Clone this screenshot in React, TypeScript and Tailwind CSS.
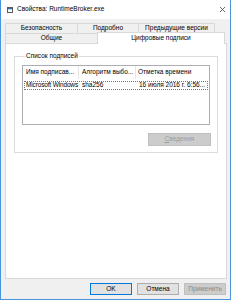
import React from 'react';

function TitleBar() {
  return (
    <div className="h-[19px] bg-white flex items-center pl-[6px] pr-[5px]">
      <svg width="6" height="6" viewBox="0 0 6 6" className="shrink-0">
        <rect x="0.5" y="0.5" width="5" height="5" fill="#ffffff" stroke="#5a5a5a" />
        <rect x="1" y="1" width="4" height="1.3" fill="#2f6fb5" />
      </svg>
      <span className="ml-[4px] text-black">Свойства: RuntimeBroker.exe</span>
      <svg width="5" height="5" viewBox="0 0 5 5" className="ml-auto shrink-0">
        <path d="M0 0L5 5M5 0L0 5" stroke="#444" strokeWidth="0.8" />
      </svg>
    </div>
  );
}

function Tabs() {
  return (
    <div className="flex flex-col">
      {/* back row */}
      <div className="flex h-[10px]">
        <div className="w-[72px] border-t border-l border-[#d9d9d9] flex items-center justify-center">Безопасность</div>
        <div className="w-[61px] border-t border-l border-[#d9d9d9] flex items-center justify-center">Подробно</div>
        <div className="w-[77px] border-t border-x border-[#d9d9d9] flex items-center justify-center">Предыдущие версии</div>
      </div>
      {/* front row */}
      <div className="flex items-end h-[10px]">
        <div className="w-[92px] h-[10px] border-t border-l border-[#d9d9d9] flex items-center justify-center">Общие</div>
        <div className="relative z-10 w-[128px] h-[12px] -mb-px bg-white border-t border-x border-[#d9d9d9] flex items-center justify-center">
          Цифровые подписи
        </div>
      </div>
    </div>
  );
}

function SignatureList() {
  return (
    <div className="w-[188px] h-[60px] border border-[#abadb3] bg-white flex flex-col">
      <div className="flex h-[13px] items-center">
        <div className="w-[56px] h-full pl-[3px] flex items-center border-r border-[#e5e5e5] overflow-hidden whitespace-nowrap">Имя подписав...</div>
        <div className="w-[57px] h-full pl-[3px] flex items-center border-r border-[#e5e5e5] overflow-hidden whitespace-nowrap">Алгоритм выбо...</div>
        <div className="flex-1 h-full pl-[2px] flex items-center whitespace-nowrap">Отметка времени</div>
      </div>
      <div className="mx-[1px] mt-[2px] h-[9px] border border-dotted border-[#777] flex items-center">
        <div className="w-[55px] pl-[1px] overflow-hidden whitespace-nowrap tracking-[-0.15px]">Microsoft Windows</div>
        <div className="w-[57px] pl-[2px] whitespace-nowrap">sha256</div>
        <div className="flex-1 pl-[2px] whitespace-nowrap overflow-hidden">16 июля 2016 г. 6:56...</div>
      </div>
    </div>
  );
}

function Panel() {
  return (
    <div className="w-[222px] h-[236px] border border-[#d9d9d9] bg-white pl-[8px] pt-[8px]">
      <fieldset className="w-[204px] border border-[#dcdcdc] pl-[7px] pr-[6px] pb-[6px] flex flex-col">
        <legend className="ml-[3px] px-[1px] leading-[8px]">Список подписей</legend>
        <div className="pt-[5px] flex flex-col">
          <SignatureList />
          <button
            disabled
            className="self-end mt-[8px] w-[63px] h-[13px] bg-[#cccccc] border border-[#bfbfbf] text-[#9d9d9d] flex items-center justify-center"
          >
            <span><span className="underline">С</span>ведения</span>
          </button>
        </div>
      </fieldset>
    </div>
  );
}

function Footer() {
  return (
    <div className="flex justify-end gap-[5px] mt-[4px] -mr-[1px] pr-[2px]">
      <button className="w-[42px] h-[12px] bg-[#e1e1e1] border border-[#0078d7] flex items-center justify-center">OK</button>
      <button className="w-[42px] h-[12px] bg-[#e1e1e1] border border-[#adadad] flex items-center justify-center">Отмена</button>
      <button disabled className="w-[42px] h-[12px] bg-[#cccccc] border border-[#bfbfbf] text-[#8a8a8a] flex items-center justify-center">Применить</button>
    </div>
  );
}

export default function App() {
  return (
    <div className="w-[231px] h-[300px] bg-[#f0f0f0] border-x border-b border-[#4a94dd] flex flex-col font-['Liberation_Sans',sans-serif] text-[6.5px] leading-none text-black">
      <TitleBar />
      <div className="pl-[4px] pr-[3px] pt-[4px] flex flex-col">
        <Tabs />
        <Panel />
        <Footer />
      </div>
    </div>
  );
}
